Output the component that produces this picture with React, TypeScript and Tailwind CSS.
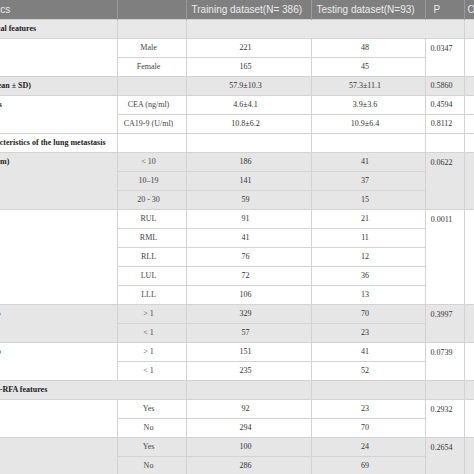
import React from "react";

const line = "border border-[#d3d3d3]";
const num = `${line} p-0 pr-[6px] text-center align-middle text-[#333]`;
const pval = `${line} p-0 pr-[6px] text-center align-top leading-[19px] text-[#333]`;
const first = `${line} border-l-0 p-0 text-left align-top overflow-hidden`;

function Label({ text, shift }: { text: string; shift: string }) {
  return (
    <div className={`whitespace-nowrap font-bold leading-[18px] text-[#222] ${shift}`}>
      {text}
    </div>
  );
}

type Pair = [string, string, string];

function Group({
  label,
  shift,
  p,
  gray,
  items,
}: {
  label: string;
  shift: string;
  p: string;
  gray?: boolean;
  items: Pair[];
}) {
  const bg = gray ? "bg-[#e6e6e6]" : "bg-white";
  return (
    <>
      {items.map((it, i) => (
        <tr key={it[0] + i} className={`h-[19px] ${bg}`}>
          {i === 0 && (
            <td rowSpan={items.length} className={first}>
              <Label text={label} shift={shift} />
            </td>
          )}
          <td className={`${num} text-[#444]`}>{it[0]}</td>
          <td className={num}>{it[1]}</td>
          <td className={num}>{it[2]}</td>
          {i === 0 && (
            <>
              <td rowSpan={items.length} className={pval}>
                {p}
              </td>
              <td rowSpan={items.length} className={line}></td>
            </>
          )}
        </tr>
      ))}
    </>
  );
}

export default function App() {
  return (
    <div className="h-[474px] w-[474px] overflow-hidden bg-white">
      <table className="w-[504px] table-fixed border-collapse font-['Liberation_Serif',serif] text-[8px]">
        <colgroup>
          <col className="w-[117px]" />
          <col className="w-[69px]" />
          <col className="w-[125px]" />
          <col className="w-[114px]" />
          <col className="w-[39px]" />
          <col className="w-[40px]" />
        </colgroup>
        <thead>
          <tr className="h-[19px] bg-[#7f7f7f] font-['Liberation_Sans',sans-serif] text-[10px] text-[#ececec]">
            <th className="overflow-hidden border-r border-[#9b9b9b] p-0 text-left font-normal">
              <div className="ml-[-56px] whitespace-nowrap">Characteristics</div>
            </th>
            <th className="border-r border-[#9b9b9b] p-0"></th>
            <th className="whitespace-nowrap border-r border-[#9b9b9b] p-0 pl-[5px] text-left font-normal">
              Training dataset(N= 386)
            </th>
            <th className="whitespace-nowrap border-r border-[#9b9b9b] p-0 pl-[5px] text-left font-normal">
              Testing dataset(N=93)
            </th>
            <th className="border-r border-[#9b9b9b] p-0 pl-[8px] text-left font-normal">P</th>
            <th className="p-0 pl-[3px] text-left font-normal">OR</th>
          </tr>
        </thead>
        <tbody>
          <tr className="h-[19px] bg-[#e8e8e8]">
            <td className={first}>
              <Label text="Clinical features" shift="ml-[-20px]" />
            </td>
            <td className={line}></td>
            <td colSpan={3} className="border-y border-[#d3d3d3]"></td>
            <td className={line}></td>
          </tr>

          <Group
            label=""
            shift=""
            p="0.0347"
            items={[
              ["Male", "221", "48"],
              ["Female", "165", "45"],
            ]}
          />

          <tr className="h-[19px] bg-[#e6e6e6]">
            <td className={first}>
              <Label text="Age (mean ± SD)" shift="ml-[-27px]" />
            </td>
            <td className={line}></td>
            <td className={num}>57.9±10.3</td>
            <td className={num}>57.3±11.1</td>
            <td className={num}>0.5860</td>
            <td className={line}></td>
          </tr>

          <tr className="h-[19px] bg-white">
            <td rowSpan={2} className={first}>
              <Label text="Markers" shift="ml-[-28px]" />
            </td>
            <td className={`${num} text-[#444]`}>CEA (ng/ml)</td>
            <td className={num}>4.6±4.1</td>
            <td className={num}>3.9±3.6</td>
            <td className={num}>0.4594</td>
            <td className={line}></td>
          </tr>
          <tr className="h-[19px] bg-white">
            <td className={`${num} text-[#444]`}>CA19-9 (U/ml)</td>
            <td className={num}>10.8±6.2</td>
            <td className={num}>10.9±6.4</td>
            <td className={num}>0.8112</td>
            <td className={line}></td>
          </tr>

          <tr className="h-[19px] bg-white">
            <td className={first}>
              <Label text="Characteristics of the lung metastasis" shift="ml-[-22px]" />
            </td>
            <td className={line}></td>
            <td className={line}></td>
            <td className={line}></td>
            <td className={line}></td>
            <td className={line}></td>
          </tr>

          <Group
            label="Size (mm)"
            shift="ml-[-25px]"
            p="0.0622"
            gray
            items={[
              ["< 10", "186", "41"],
              ["10–19", "141", "37"],
              ["20 - 30", "59", "15"],
            ]}
          />

          <Group
            label="Location"
            shift="ml-[-60px]"
            p="0.0011"
            items={[
              ["RUL", "91", "21"],
              ["RML", "41", "11"],
              ["RLL", "76", "12"],
              ["LUL", "72", "36"],
              ["LLL", "106", "13"],
            ]}
          />

          <Group
            label="CT ratio"
            shift="ml-[-29px]"
            p="0.3997"
            gray
            items={[
              ["> 1", "329", "70"],
              ["< 1", "57", "23"],
            ]}
          />

          <Group
            label="MR ratio"
            shift="ml-[-31px]"
            p="0.0739"
            items={[
              ["> 1", "151", "41"],
              ["< 1", "235", "52"],
            ]}
          />

          <tr className="h-[19px] bg-[#e6e6e6]">
            <td colSpan={2} className={first}>
              <Label text="Intra-RFA features" shift="ml-[-18px]" />
            </td>
            <td className={line}></td>
            <td className={line}></td>
            <td className={line}></td>
            <td className={line}></td>
          </tr>

          <Group
            label=""
            shift=""
            p="0.2932"
            items={[
              ["Yes", "92", "23"],
              ["No", "294", "70"],
            ]}
          />

          <Group
            label=""
            shift=""
            p="0.2654"
            gray
            items={[
              ["Yes", "100", "24"],
              ["No", "286", "69"],
            ]}
          />
        </tbody>
      </table>
    </div>
  );
}
